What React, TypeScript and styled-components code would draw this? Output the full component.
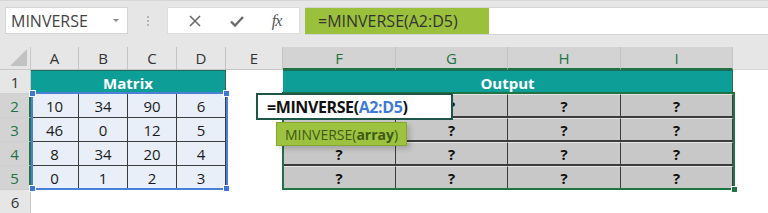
import React from 'react'
import styled, { createGlobalStyle } from 'styled-components'

const GlobalStyle = createGlobalStyle`
  html, body {
    margin: 0;
    padding: 0;
  }
  body {
    background: #ffffff;
    font-family: 'Open Sans', 'Noto Sans', sans-serif;
  }
`

const Page = styled.div`
  width: 768px;
  height: 213px;
  overflow: hidden;
  background: #ffffff;
`

const FormulaBar = styled.div`
  height: 47px;
  box-sizing: border-box;
  background: #e6e6e6;
  border-top: 1px solid #d6d6d6;
  padding-top: 6px;
  padding-left: 5px;
  display: flex;
  align-items: flex-start;
`

const NameBox = styled.div`
  width: 123px;
  height: 27px;
  box-sizing: border-box;
  background: #ffffff;
  border: 1px solid #d4d4d4;
  display: flex;
  align-items: center;
  justify-content: space-between;
  padding: 0 8px 0 5px;
  font-size: 16px;
  color: #444444;
`

const DropArrow = styled.span`
  width: 0;
  height: 0;
  border-left: 3px solid transparent;
  border-right: 3px solid transparent;
  border-top: 3px solid #8a8a8a;
`

const Grip = styled.div`
  width: 39px;
  height: 27px;
  display: flex;
  flex-direction: column;
  align-items: center;
  justify-content: center;
  gap: 2px;
`

const GripDot = styled.span`
  width: 2px;
  height: 2px;
  background: #b4b4b4;
`

const IconBox = styled.div`
  width: 133px;
  height: 27px;
  box-sizing: border-box;
  background: #ffffff;
  border: 1px solid #dcdcdc;
  display: flex;
  align-items: center;
  justify-content: space-around;
  padding: 0 4px 0 6px;
  color: #6a6a6a;
`

const Fx = styled.span`
  font-family: 'Liberation Serif', 'DejaVu Serif', serif;
  font-style: italic;
  font-size: 16px;
  color: #555555;
  letter-spacing: -1px;
`

const FormulaInput = styled.div`
  flex: 1;
  margin-left: 5px;
  height: 28px;
  background: #ffffff;
  border-top: 1px solid #d4d4d4;
  border-bottom: 1px solid #d4d4d4;
  box-sizing: border-box;
  display: flex;
`

const FormulaText = styled.div`
  width: 184px;
  height: 100%;
  background: #9bc13c;
  box-sizing: border-box;
  padding-left: 13px;
  display: flex;
  align-items: center;
  font-size: 16px;
  color: #333333;
`

const Sheet = styled.div`
  position: relative;
  display: grid;
  grid-template-columns: 31px 48px 49px 49px 49px 57px 113px 112px 113px 112px 1fr;
  grid-template-rows: 23px repeat(6, 24px);
  font-family: 'Open Sans', 'Noto Sans', sans-serif;
`

const Corner = styled.div`
  background: #e6e6e6;
  border-right: 1px solid #c8c8c8;
  border-bottom: 1px solid #c8c8c8;
  box-sizing: border-box;
  display: flex;
  align-items: flex-end;
  justify-content: flex-end;
  padding: 0 3px 3px 0;
`

const ColHead = styled.div<{ $active?: boolean }>`
  background: ${(p) => (p.$active ? '#d3d3d3' : '#e6e6e6')};
  color: ${(p) => (p.$active ? '#217346' : '#333333')};
  border-right: 1px solid #c4c4c4;
  border-bottom: ${(p) => (p.$active ? '2px solid #217346' : '1px solid #c8c8c8')};
  box-sizing: border-box;
  display: flex;
  align-items: center;
  justify-content: center;
  font-size: 15px;
`

const HeadFiller = styled.div`
  background: #e6e6e6;
  border-bottom: 1px solid #d8d8d8;
`

const RowHead = styled.div<{ $active?: boolean }>`
  background: ${(p) => (p.$active ? '#d3d3d3' : '#e6e6e6')};
  color: ${(p) => (p.$active ? '#217346' : '#333333')};
  border-right: ${(p) => (p.$active ? '2px solid #217346' : '1px solid #c8c8c8')};
  border-bottom: 1px solid #cfcfcf;
  box-sizing: border-box;
  display: flex;
  align-items: center;
  justify-content: center;
  font-size: 15px;
`

const Blank = styled.div<{ $span?: number }>`
  grid-column: span ${(p) => p.$span ?? 1};
  background: #ffffff;
`

const Title = styled.div`
  grid-column: span 4;
  background: #0e9e98;
  color: #ffffff;
  font-weight: 700;
  font-size: 15px;
  display: flex;
  align-items: center;
  justify-content: center;
  border-top: 1px solid #1b6f5a;
  border-right: 1px solid #3f5e57;
  box-sizing: border-box;
`

const NumCell = styled.div`
  background: #e9eff8;
  border-right: 1px solid #3c3c3c;
  border-bottom: 1px solid #3c3c3c;
  box-sizing: border-box;
  display: flex;
  align-items: center;
  justify-content: center;
  font-size: 15px;
  color: #1a1a1a;
`

const QCell = styled.div`
  background: #c8c8c8;
  border-right: 1px solid #3c3c3c;
  border-bottom: 2px solid #3c3c3c;
  border-top: 1px solid #e4e4e4;
  box-sizing: border-box;
  display: flex;
  align-items: center;
  justify-content: center;
  font-size: 15px;
  font-weight: 700;
  color: #111111;
`

const RangeBox = styled.div<{ $color: string }>`
  position: absolute;
  box-sizing: border-box;
  border: 2px solid ${(p) => p.$color};
  pointer-events: none;
`

const Handle = styled.span<{ $color: string; $size: number }>`
  position: absolute;
  width: ${(p) => p.$size}px;
  height: ${(p) => p.$size}px;
  background: ${(p) => p.$color};
  border: 1px solid #ffffff;
`

const EditCell = styled.div`
  position: absolute;
  left: 256px;
  top: 46px;
  width: 197px;
  height: 27px;
  box-sizing: border-box;
  background: #ffffff;
  border: 2px solid #1d5549;
  padding-left: 9px;
  display: flex;
  align-items: center;
  font-size: 16px;
  font-weight: 700;
  letter-spacing: -0.4px;
  color: #111111;
  white-space: nowrap;
`

const RefText = styled.span`
  color: #3f7ad6;
`

const Tip = styled.div`
  position: absolute;
  left: 276px;
  top: 75px;
  width: 131px;
  height: 24px;
  box-sizing: border-box;
  background: #9dc23f;
  border: 1px solid #86a830;
  box-shadow: 3px 3px 5px rgba(0, 0, 0, 0.18);
  padding-left: 8px;
  display: flex;
  align-items: center;
  font-size: 14px;
  color: #3e5a16;
  white-space: nowrap;
`

const matrix = [
  [10, 34, 90, 6],
  [46, 0, 12, 5],
  [8, 34, 20, 4],
  [0, 1, 2, 3],
]

const cols = ['A', 'B', 'C', 'D', 'E', 'F', 'G', 'H', 'I']

// F2 and F3 sit under the in-cell editor and its tooltip, so they show nothing
const hidden = (r: number, c: number) => c === 0 && r < 2

export default function App() {
  return (
    <Page>
      <GlobalStyle />
      <FormulaBar>
        <NameBox>
          MINVERSE
          <DropArrow />
        </NameBox>
        <Grip>
          <GripDot />
          <GripDot />
          <GripDot />
        </Grip>
        <IconBox>
          <svg width="14" height="14" viewBox="0 0 14 14">
            <path d="M2 2 L12 12 M12 2 L2 12" stroke="#6a6a6a" strokeWidth="1.6" fill="none" />
          </svg>
          <svg width="16" height="14" viewBox="0 0 16 14">
            <path d="M2 7.5 L6 11.5 L14 3" stroke="#6a6a6a" strokeWidth="2.4" fill="none" />
          </svg>
          <Fx>fx</Fx>
        </IconBox>
        <FormulaInput>
          <FormulaText>=MINVERSE(A2:D5)</FormulaText>
        </FormulaInput>
      </FormulaBar>
      <Sheet>
        <Corner>
          <svg width="17" height="17" viewBox="0 0 17 17">
            <path d="M17 0 L17 17 L0 17 Z" fill="#c2c2c2" />
          </svg>
        </Corner>
        {cols.map((c, i) => (
          <ColHead key={c} $active={i >= 5}>
            {c}
          </ColHead>
        ))}
        <HeadFiller />

        <RowHead>1</RowHead>
        <Title>Matrix</Title>
        <Blank />
        <Title>Output</Title>
        <Blank />

        {matrix.map((row, r) => (
          <React.Fragment key={r}>
            <RowHead $active>{r + 2}</RowHead>
            {row.map((v, c) => (
              <NumCell key={c}>{v}</NumCell>
            ))}
            <Blank />
            {[0, 1, 2, 3].map((c) => (
              <QCell key={c}>{hidden(r, c) ? '' : '?'}</QCell>
            ))}
            <Blank />
          </React.Fragment>
        ))}

        <RowHead>6</RowHead>
        <Blank $span={10} />

        <RangeBox $color="#4a80d8" style={{ left: 31, top: 45, width: 197, height: 98 }}>
          <Handle $color="#3f78d4" $size={5} style={{ left: -4, top: -4 }} />
          <Handle $color="#3f78d4" $size={5} style={{ right: -4, top: -4 }} />
          <Handle $color="#3f78d4" $size={5} style={{ left: -4, bottom: -4 }} />
          <Handle $color="#3f78d4" $size={5} style={{ right: -4, bottom: -4 }} />
        </RangeBox>
        <RangeBox $color="#217346" style={{ left: 282, top: 45, width: 453, height: 98 }}>
          <Handle $color="#217346" $size={5} style={{ right: -5, bottom: -5 }} />
        </RangeBox>

        <EditCell>
          =MINVERSE(<RefText>A2:D5</RefText>)
        </EditCell>
        <Tip>
          MINVERSE(<b>array</b>)
        </Tip>
      </Sheet>
    </Page>
  )
}
